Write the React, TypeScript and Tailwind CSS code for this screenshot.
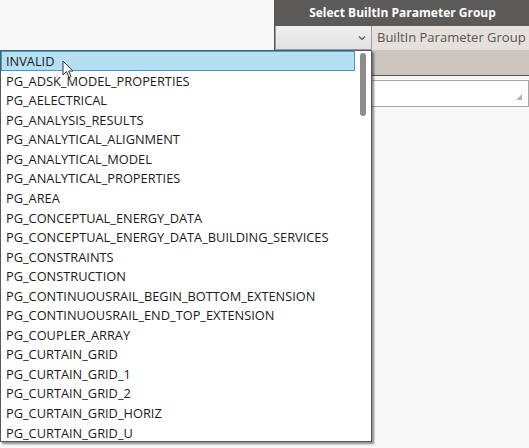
const items = [
  "INVALID",
  "PG_ADSK_MODEL_PROPERTIES",
  "PG_AELECTRICAL",
  "PG_ANALYSIS_RESULTS",
  "PG_ANALYTICAL_ALIGNMENT",
  "PG_ANALYTICAL_MODEL",
  "PG_ANALYTICAL_PROPERTIES",
  "PG_AREA",
  "PG_CONCEPTUAL_ENERGY_DATA",
  "PG_CONCEPTUAL_ENERGY_DATA_BUILDING_SERVICES",
  "PG_CONSTRAINTS",
  "PG_CONSTRUCTION",
  "PG_CONTINUOUSRAIL_BEGIN_BOTTOM_EXTENSION",
  "PG_CONTINUOUSRAIL_END_TOP_EXTENSION",
  "PG_COUPLER_ARRAY",
  "PG_CURTAIN_GRID",
  "PG_CURTAIN_GRID_1",
  "PG_CURTAIN_GRID_2",
  "PG_CURTAIN_GRID_HORIZ",
  "PG_CURTAIN_GRID_U",
];

function Cursor() {
  return (
    <svg width="13" height="19" viewBox="0 0 13 19" className="absolute left-[62px] top-[60px]">
      <path
        d="M1 1 L1 15 L4.5 11.5 L7 17.5 L9 16.6 L6.6 11 L11 11 Z"
        fill="#ffffff"
        stroke="#333333"
        strokeWidth="1"
        strokeLinejoin="round"
      />
    </svg>
  );
}

// node on the canvas, with its preview input below
function Node() {
  return (
    <div className="absolute left-[274px] top-0 w-[260px] flex flex-col">
      <div className="border-l border-b border-[#555453] bg-[#ccc6bf]">
        <div className="h-[26px] bg-[#5b5a59] flex items-center justify-center pr-[4px] text-[12px] font-bold text-white">
          Select BuiltIn Parameter Group
        </div>
        <div className="flex h-[24px]">
          <div className="w-[97px] border-l border-b border-r border-[#9a9a9a] bg-gradient-to-b from-[#efefef] to-[#e2e2e2] flex items-center justify-end pr-[5px]">
            <svg width="8" height="6" viewBox="0 0 8 6">
              <path d="M1 1.5 L4 4.5 L7 1.5" fill="none" stroke="#555" strokeWidth="1.2" />
            </svg>
          </div>
          <div className="flex-1 bg-[#e5e0db] flex items-center pl-[5px] text-[13px] text-[#555555]">
            BuiltIn Parameter Group
          </div>
        </div>
        <div className="h-[25px]" />
      </div>
      <div className="relative mt-[4px] ml-[96px] w-[159px] h-[27px] bg-white border border-[#a8a8a8]">
        <svg width="6" height="6" viewBox="0 0 6 6" className="absolute right-[6px] bottom-[6px]">
          <path d="M6 0 L6 6 L0 6 Z" fill="#b5b5b5" />
        </svg>
      </div>
    </div>
  );
}

function Dropdown() {
  return (
    <div className="absolute left-0 top-[50px] w-[372px] h-[392px] bg-white border border-[#5a5a5a] shadow-[2px_2px_2px_rgba(0,0,0,0.45)] overflow-hidden flex">
      <div className="flex-1 flex flex-col">
        {items.map((it, i) => (
          <div
            key={it}
            className={
              i === 0
                ? "h-[19.55px] shrink-0 flex items-center pl-[4px] pt-[1px] bg-[#b6dff3] border border-[#3c9ad4] text-[12.8px] text-[#1a1a1a] whitespace-nowrap"
                : "h-[19.55px] shrink-0 flex items-center pl-[5px] pt-[2px] text-[12.8px] text-[#1a1a1a] whitespace-nowrap"
            }
          >
            {it}
          </div>
        ))}
      </div>
      <div className="w-[16px] shrink-0 pt-[2px] flex justify-center">
        <div className="w-[6px] h-[63px] rounded-full bg-[#8c8c8c]" />
      </div>
    </div>
  );
}

export default function App() {
  return (
    <div
      className="relative w-[529px] h-[448px] bg-[#f8f8f8] overflow-hidden"
      style={{ fontFamily: '"Open Sans", "Noto Sans", sans-serif' }}
    >
      <Node />
      <Dropdown />
      <Cursor />
    </div>
  );
}
